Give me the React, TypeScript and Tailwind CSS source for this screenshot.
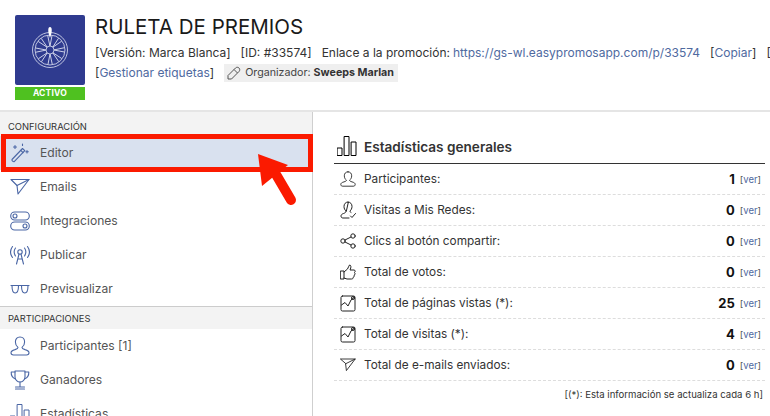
import type { ReactNode } from "react";

const S = { fill: "none", stroke: "currentColor", strokeWidth: 1.1, strokeLinecap: "round", strokeLinejoin: "round" } as const;

function Wheel() {
  const spokes = [0, 45, 90, 135, 180, 225, 270, 315];
  return (
    <svg width="40" height="44" viewBox="0 0 40 44" fill="none" stroke="#dfe3f3" strokeWidth="0.8">
      <circle cx="20" cy="24" r="17.5" />
      <circle cx="20" cy="24" r="15" />
      <circle cx="20" cy="24" r="4" />
      {spokes.map((a) => (
        <g key={a} transform={`rotate(${a + 22} 20 24)`}>
          <path d="M18.5 20.2 L16.5 10 M21.5 20.2 L23.5 10" />
        </g>
      ))}
      <path d="M20 1 C22.2 1 22.5 5 20 12 C17.5 5 17.8 1 20 1Z" fill="#ffffff" stroke="none" />
    </svg>
  );
}

function Wand() {
  return (
    <svg width="20" height="20" viewBox="0 0 20 20" {...S}>
      <path d="M2 16.5 L12.5 5.5 L14.8 7.6 L4.2 18.7 C3.2 19 1.6 17.6 2 16.5Z" />
      <path d="M10.8 7.4 L13 9.6" />
      <path d="M5 2.5v3M3.5 4h3M17 7.5v2.5M15.8 8.7h2.5M12.5 1v1.5" />
    </svg>
  );
}

function Plane({ size = 20 }: { size?: number }) {
  return (
    <svg width={size} height={size} viewBox="0 0 20 20" {...S}>
      <path d="M1 2.5 L19 2.5 L8 17 L7 8.5Z" />
      <path d="M7 8.5 L19 2.5" />
    </svg>
  );
}

function Toggles() {
  return (
    <svg width="20" height="20" viewBox="0 0 20 20" {...S}>
      <rect x="0.7" y="1" width="18.6" height="8" rx="4" />
      <circle cx="5" cy="5" r="2" />
      <rect x="0.7" y="11" width="18.6" height="8" rx="4" />
      <circle cx="15" cy="15" r="2" />
    </svg>
  );
}

function Antenna() {
  return (
    <svg width="20" height="20" viewBox="0 0 20 20" {...S}>
      <circle cx="10" cy="7" r="2.2" />
      <path d="M9 9 L6.5 19 M11 9 L13.5 19 M8 14h4" />
      <path d="M5.5 3 C3.8 5.5 3.8 8.5 5.5 11 M14.5 3 C16.2 5.5 16.2 8.5 14.5 11" />
      <path d="M2.5 1.5 C0 5 0 9 2.5 12.5 M17.5 1.5 C20 5 20 9 17.5 12.5" />
    </svg>
  );
}

function Glasses() {
  return (
    <svg width="20" height="20" viewBox="0 0 20 20" {...S}>
      <path d="M1 6.5 H19" />
      <path d="M2 6.5 C2 11 2.8 14 5.2 14 C7.8 14 8.5 11 8.5 6.5" />
      <path d="M11.5 6.5 C11.5 11 12.2 14 14.8 14 C17.2 14 18 11 18 6.5" />
    </svg>
  );
}

function User({ size = 20 }: { size?: number }) {
  return (
    <svg width={size} height={size} viewBox="0 0 20 20" {...S}>
      <path d="M10 1 C13 1 14.6 3.2 14.6 6 C14.6 8.6 13.4 10.4 12 11.4 C12 12.6 13 13 15 13.6 C17.6 14.3 19 15.2 19 16.8 C19 18.3 18 19 16.5 19 H3.5 C2 19 1 18.3 1 16.8 C1 15.2 2.4 14.3 5 13.6 C7 13 8 12.6 8 11.4 C6.6 10.4 5.4 8.6 5.4 6 C5.4 3.2 7 1 10 1Z" />
    </svg>
  );
}

function UserCheck() {
  return (
    <svg width="16" height="18" viewBox="0 0 16 18" {...S} strokeWidth={1}>
      <path d="M8 1 C10.5 1 12 3 12 5.5 C12 7.6 11 9 10 10 C10 10.8 10.2 11.2 11 11.5 M6 10 C6 11.5 5 12 3.5 12.5 C1.8 13 1 14 1 15 C1 16.3 1.8 17 3 17 H9 M6 10 C4.8 9 4 7.6 4 5.5 C4 3 5.5 1 8 1Z" />
      <path d="M10.5 15 L12 16.5 L15.5 12.5" />
    </svg>
  );
}

function Share() {
  return (
    <svg width="16" height="16" viewBox="0 0 16 16" {...S} strokeWidth={1}>
      <circle cx="3" cy="8" r="2.2" />
      <circle cx="13" cy="3" r="2.2" />
      <circle cx="13" cy="13" r="2.2" />
      <path d="M5 7 L11 4 M5 9 L11 12" />
    </svg>
  );
}

function Thumb() {
  return (
    <svg width="16" height="16" viewBox="0 0 16 16" {...S} strokeWidth={1}>
      <rect x="0.7" y="7" width="3.3" height="8" />
      <path d="M4 8 L7.5 5 C8.5 3.5 8.6 2 9.5 1 C11 1 11.5 3 10 6 H14 C15.5 6 15.5 8 14.5 8.5 C15.5 9.5 15 11 14 11 C14.6 12 14 13 13.2 13.2 C13.4 14.5 12.5 15 11.5 15 H7 L4 14" />
    </svg>
  );
}

function Chart() {
  return (
    <svg width="16" height="18" viewBox="0 0 16 18" {...S} strokeWidth={1}>
      <rect x="1" y="2" width="14" height="15" rx="1.5" />
      <path d="M1.5 11 L5 8.5 L8 12 L11 6 L14.5 3" />
      <circle cx="13" cy="4" r="1.5" />
    </svg>
  );
}

function Bars() {
  return (
    <svg width="20" height="20" viewBox="0 0 20 20" {...S} strokeWidth={1}>
      <rect x="0.5" y="12" width="4.5" height="7.5" />
      <rect x="7.5" y="0.5" width="4.5" height="19" />
      <rect x="14.5" y="6" width="4.5" height="13.5" />
    </svg>
  );
}

function Trophy() {
  return (
    <svg width="20" height="20" viewBox="0 0 20 20" {...S}>
      <path d="M5 1 H15 V7 C15 10 12.5 12 10 12 C7.5 12 5 10 5 7Z" />
      <path d="M5 2 H1.2 C1 6 3 8 5.5 9 M15 2 H18.8 C19 6 17 8 14.5 9" />
      <path d="M10 12 V17 M5.5 17 H14.5 M5.5 19 H14.5" />
    </svg>
  );
}

function Tag() {
  return (
    <svg width="14" height="14" viewBox="0 0 14 14" fill="none" stroke="#555" strokeWidth="1">
      <path d="M1 9.5 L8.5 2 C9.5 1 11 1 12 2 C13 3 13 4.5 12 5.5 L4.5 13 L1 13Z" />
      <path d="M7 3.5 L10.5 7" />
    </svg>
  );
}

function Section({ className, children }: { className: string; children: ReactNode }) {
  return (
    <div className={`flex items-center bg-[#f3f3f3] pl-2 text-[9.4px] text-[#333] ${className}`}>{children}</div>
  );
}

function NavItem({ icon, label, active }: { icon: ReactNode; label: string; active?: boolean }) {
  return (
    <div
      className={`flex h-[34px] items-center gap-[10px] pl-[10px] text-[12.1px] text-[#555] ${
        active ? "bg-[#d9e1ef]" : ""
      }`}
    >
      <span className="flex w-5 shrink-0 justify-center text-[#4a66a5]">{icon}</span>
      <span className="pt-px">{label}</span>
    </div>
  );
}

function StatRow({ icon, label, value }: { icon: ReactNode; label: string; value: string }) {
  return (
    <div className="flex h-[31px] items-center border-b border-dashed border-[#dddddd] pl-[6px] text-[11.8px] text-[#333]">
      <span className="flex w-4 shrink-0 justify-center text-[#222]">{icon}</span>
      <span className="ml-2 pt-[2px]">{label}</span>
      <span className="ml-auto pt-[2px] text-[13px] font-bold text-[#111]">{value}</span>
      <span className="ml-[5px] mr-[4px] pt-[2px] text-[9.5px] text-[#555]">
        [<span className="text-[#4f6a9f]">ver</span>]
      </span>
    </div>
  );
}

export default function App() {
  return (
    <div className="relative h-[416px] w-[770px] overflow-hidden bg-white font-['Inter',sans-serif]">
      <header className="flex h-[112px] border-b-2 border-[#e5e5e5] pl-[15px] pt-[15px]">
        <div className="w-[70px] shrink-0">
          <div className="flex h-[70px] items-center justify-center rounded-[2px] bg-[#2f3b8f] pb-1">
            <Wheel />
          </div>
          <div className="mt-[2px] flex h-[13px] items-center justify-center bg-[#4fc120] text-[8.5px] font-bold tracking-wide text-white">
            ACTIVO
          </div>
        </div>
        <div className="ml-[10px] min-w-0 whitespace-nowrap">
          <h1 className="text-[20.5px] leading-[24px] text-[#1a1a1a]">RULETA DE PREMIOS</h1>
          <div className="mt-[6px] flex h-[16px] items-center text-[12px] text-[#333]">
            <span>[Versión: Marca Blanca]</span>
            <span className="ml-[10px]">[ID: #33574]</span>
            <span className="ml-[10px]">Enlace a la promoción:</span>
            <span className="ml-[3px] text-[#4f6a9f]">https://gs-wl.easypromosapp.com/p/33574</span>
            <span className="ml-[10px]">
              [<span className="text-[#4f6a9f]">Copiar</span>]
            </span>
            <span className="ml-[10px]">
              [<span className="text-[#4f6a9f]">C</span>
            </span>
          </div>
          <div className="mt-[3px] flex h-[18px] items-center text-[12px] text-[#333]">
            <span>
              [<span className="text-[#4f6a9f]">Gestionar etiquetas</span>]
            </span>
            <span className="ml-[10px] flex h-[18px] items-center bg-[#efefef] pl-[3px] pr-[4px] text-[10.7px] text-[#444]">
              <Tag />
              <span className="ml-[4px]">Organizador:</span>
              <b className="ml-[3px] font-bold text-[#333]">Sweeps Marlan</b>
            </span>
          </div>
        </div>
      </header>

      <div className="flex h-[304px]">
        <aside className="w-[313px] shrink-0 border-r border-[#cfcfcf]">
          <Section className="h-[24px] pt-[6px]">CONFIGURACIÓN</Section>
          <NavItem icon={<Wand />} label="Editor" active />
          <NavItem icon={<Plane />} label="Emails" />
          <NavItem icon={<Toggles />} label="Integraciones" />
          <NavItem icon={<Antenna />} label="Publicar" />
          <NavItem icon={<Glasses />} label="Previsualizar" />
          <div className="border-t border-[#cccccc]">
            <Section className="h-[22px] pt-[3px]">PARTICIPACIONES</Section>
          </div>
          <NavItem icon={<User />} label="Participantes [1]" />
          <NavItem icon={<Trophy />} label="Ganadores" />
          <NavItem icon={<Bars />} label="Estadísticas" />
        </aside>

        <main className="ml-[21px] w-[431px] pt-[21px]">
          <div className="flex h-[31px] items-start border-b border-[#333] pl-[3px]">
            <span className="mt-[3px] flex">
              <Bars />
            </span>
            <span className="ml-[7px] mt-[4px] text-[13.6px] font-semibold text-[#333]">Estadísticas generales</span>
          </div>
          <StatRow icon={<User size={16} />} label="Participantes:" value="1" />
          <StatRow icon={<UserCheck />} label="Visitas a Mis Redes:" value="0" />
          <StatRow icon={<Share />} label="Clics al botón compartir:" value="0" />
          <StatRow icon={<Thumb />} label="Total de votos:" value="0" />
          <StatRow icon={<Chart />} label="Total de páginas vistas (*):" value="25" />
          <StatRow icon={<Chart />} label="Total de visitas (*):" value="4" />
          <StatRow icon={<Plane size={16} />} label="Total de e-mails enviados:" value="0" />
          <p className="mr-[2px] mt-[7px] text-right text-[9.6px] text-[#333]">
            [(*): Esta información se actualiza cada 6 h]
          </p>
        </main>
      </div>

      {/* red annotation over the active row */}
      <div className="absolute left-[1px] top-[134px] h-[38px] w-[312px] border-[5px] border-[#fb1a00]" />
      <svg className="absolute left-[250px] top-[145px]" width="60" height="70" viewBox="0 0 60 70">
        <path d="M8 9 L38 20 L12 41Z" fill="#fb1a00" />
        <path d="M24 26 L41 55" fill="none" stroke="#fb1a00" strokeWidth="10" strokeLinecap="round" />
      </svg>
    </div>
  );
}
